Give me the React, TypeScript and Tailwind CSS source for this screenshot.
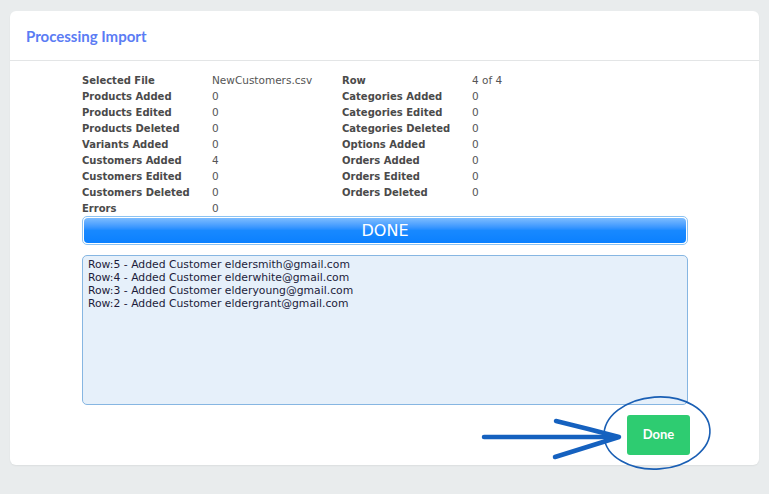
import React from 'react';

const left = [
  ['Selected File', 'NewCustomers.csv'],
  ['Products Added', '0'],
  ['Products Edited', '0'],
  ['Products Deleted', '0'],
  ['Variants Added', '0'],
  ['Customers Added', '4'],
  ['Customers Edited', '0'],
  ['Customers Deleted', '0'],
  ['Errors', '0'],
];

const right = [
  ['Row', '4 of 4'],
  ['Categories Added', '0'],
  ['Categories Edited', '0'],
  ['Categories Deleted', '0'],
  ['Options Added', '0'],
  ['Orders Added', '0'],
  ['Orders Edited', '0'],
  ['Orders Deleted', '0'],
];

const log = [
  'Row:5 - Added Customer eldersmith@gmail.com',
  'Row:4 - Added Customer elderwhite@gmail.com',
  'Row:3 - Added Customer elderyoung@gmail.com',
  'Row:2 - Added Customer eldergrant@gmail.com',
];

function StatColumn({ rows }: { rows: string[][] }) {
  return (
    <div className="w-[260px]">
      {rows.map(([label, value]) => (
        <div key={label} className="flex h-4 items-baseline">
          <span className="w-[130px] text-[10px] font-bold text-[#4a4a4a]">{label}</span>
          <span className="text-[10.5px] text-[#555]">{value}</span>
        </div>
      ))}
    </div>
  );
}

export default function App() {
  return (
    <div className="min-h-[494px] bg-[#e9eced] px-[10px] pt-[11px] pb-[29px]">
      <div className="relative rounded-md bg-white shadow-[0_1px_2px_rgba(0,0,0,0.06)]">
        {/* Header */}
        <div className="h-[50px] border-b border-[#e3e5e6] px-4 flex items-center">
          <h1 className="text-[15px] font-bold text-[#5b7cf4] font-['Lato',sans-serif] mt-[1px]">
            Processing Import
          </h1>
        </div>

        <div className="pl-[72px] pr-[71px] pt-[11px] pb-[10px]">
          {/* Stats */}
          <div className="flex font-['DejaVu_Sans','Verdana',sans-serif] leading-4">
            <StatColumn rows={left} />
            <StatColumn rows={right} />
          </div>

          {/* Progress bar */}
          <div className="h-[29px] rounded-[5px] border border-[#8cc3f3] p-px">
            <div className="flex h-full items-center justify-center rounded-[4px] bg-gradient-to-b from-[#7cbcff] via-[#1889ff] to-[#0a80ff] text-[16px] text-white font-['DejaVu_Sans','Verdana',sans-serif]">
              DONE
            </div>
          </div>

          {/* Log */}
          <div className="mt-[10px] h-[150px] rounded-[5px] border border-[#86b6e2] bg-[#e6f0fa] px-[5px] py-[2px] text-[10.8px] leading-[13px] text-[#1c1c3a] font-['DejaVu_Sans','Verdana',sans-serif]">
            {log.map((line) => (
              <div key={line}>{line}</div>
            ))}
          </div>

          {/* Footer */}
          <div className="mt-[10px] -mr-[2px] flex justify-end">
            <div className="relative">
              <button className="h-10 w-[63px] rounded-[3px] bg-[#2ecc71] text-[13px] font-bold text-white font-['Lato',sans-serif]">
                Done
              </button>
              <svg
                className="absolute left-[-148px] top-[-24px] pointer-events-none"
                width="260"
                height="92"
                viewBox="0 0 260 92"
              >
                <ellipse cx="178" cy="42" rx="53" ry="36" fill="none" stroke="#1a5fb4" strokeWidth="1.6" transform="rotate(-4 178 42)" />
                <path d="M5 46 L138 46" stroke="#1561bf" strokeWidth="4.5" strokeLinecap="round" fill="none" />
                <path d="M77 30 Q110 38 140 46 Q108 56 76 66" stroke="#1561bf" strokeWidth="4.5" strokeLinecap="round" strokeLinejoin="round" fill="none" />
              </svg>
            </div>
          </div>
        </div>
      </div>
    </div>
  );
}
